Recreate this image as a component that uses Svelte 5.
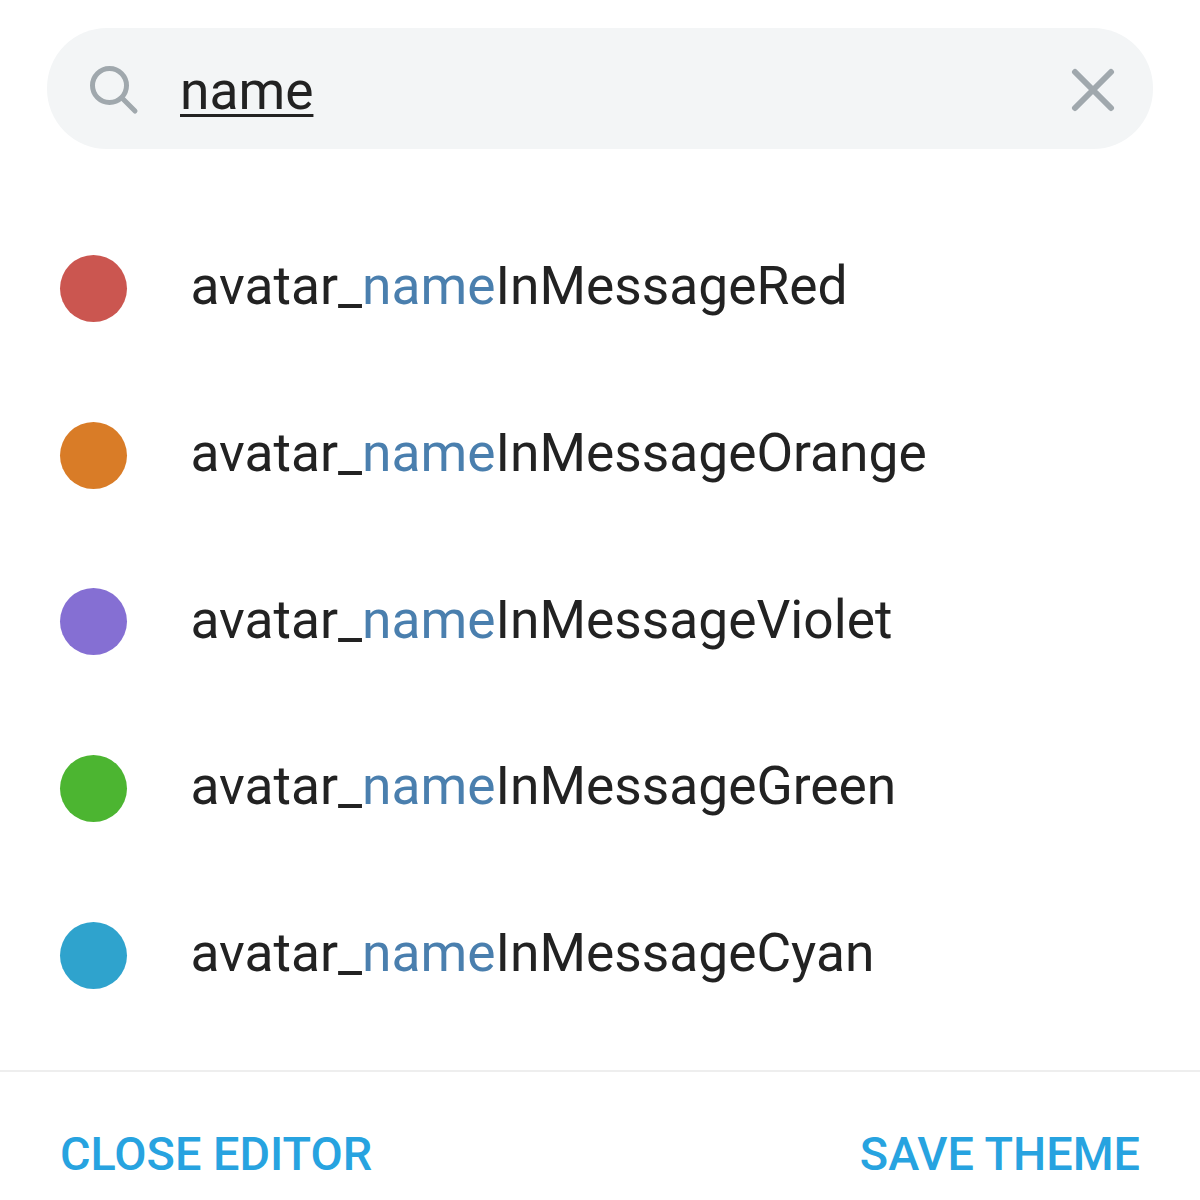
<script>
  const colors = [
    { suffix: "Red", color: "#cb5650" },
    { suffix: "Orange", color: "#d97c27" },
    { suffix: "Violet", color: "#856fd3" },
    { suffix: "Green", color: "#4cb531" },
    { suffix: "Cyan", color: "#2fa3cd" },
  ];
</script>

<main class="editor">
  <div class="search">
    <svg class="search-icon" width="50" height="50" viewBox="0 0 50 50" fill="none">
      <circle cx="20.5" cy="20.5" r="17" stroke="#a0a8ad" stroke-width="5" />
      <path d="M33 33 L46 46" stroke="#a0a8ad" stroke-width="5" stroke-linecap="round" />
    </svg>
    <span class="query">name</span>
    <svg class="clear-icon" width="44" height="44" viewBox="0 0 44 44" fill="none">
      <path d="M4 4 L40 40 M40 4 L4 40" stroke="#a0a8ad" stroke-width="6" stroke-linecap="round" />
    </svg>
  </div>

  <ul class="list">
    {#each colors as item}
      <li class="row">
        <span class="dot" style="background: {item.color}"></span>
        <span class="label">avatar_<span class="match">name</span>InMessage{item.suffix}</span>
      </li>
    {/each}
  </ul>

  <footer class="footer">
    <button>CLOSE EDITOR</button>
    <button>SAVE THEME</button>
  </footer>
</main>

<style>
  :global(body) {
    background: #fff;
  }

  .editor {
    display: flex;
    flex-direction: column;
    height: 1200px;
    overflow: hidden;
    font-family: Roboto, "Liberation Sans", sans-serif;
    color: #222;
  }

  .search {
    display: flex;
    flex-shrink: 0;
    align-items: center;
    height: 121px;
    margin: 28px 47px 0;
    padding: 0 38px 0 42px;
    background: #f3f5f6;
    border-radius: 60px;
  }

  .search-icon {
    flex-shrink: 0;
    margin-top: 2px;
  }

  .clear-icon {
    margin-top: 2px;
  }

  .query {
    flex: 1;
    margin: 4px 0 0 41px;
    font-size: 53.3px;
    line-height: 62px;
    text-decoration: underline;
    text-decoration-thickness: 3px;
    text-underline-offset: 5px;
    color: #222;
  }

  .list {
    flex-shrink: 0;
    list-style: none;
    margin: 56px 0 0;
    padding: 0;
  }

  .row {
    display: flex;
    align-items: center;
    height: 166.7px;
    padding-left: 60px;
  }

  .dot {
    width: 67px;
    height: 67px;
    border-radius: 50%;
    flex-shrink: 0;
  }

  .label {
    margin: 0 0 4px 63.5px;
    font-size: 53.3px;
    line-height: 62px;
    white-space: nowrap;
  }

  .match {
    color: #4a7fae;
  }

  .footer {
    display: flex;
    flex-shrink: 0;
    justify-content: space-between;
    align-items: center;
    margin-top: 32px;
    height: 163px;
    padding: 0 60px;
    border-top: 2px solid #eeeeee;
  }

  button {
    padding: 0;
    border: none;
    background: none;
    font-family: inherit;
    font-size: 46.8px;
    font-weight: 500;
    color: #27a3e0;
    cursor: pointer;
  }
</style>
